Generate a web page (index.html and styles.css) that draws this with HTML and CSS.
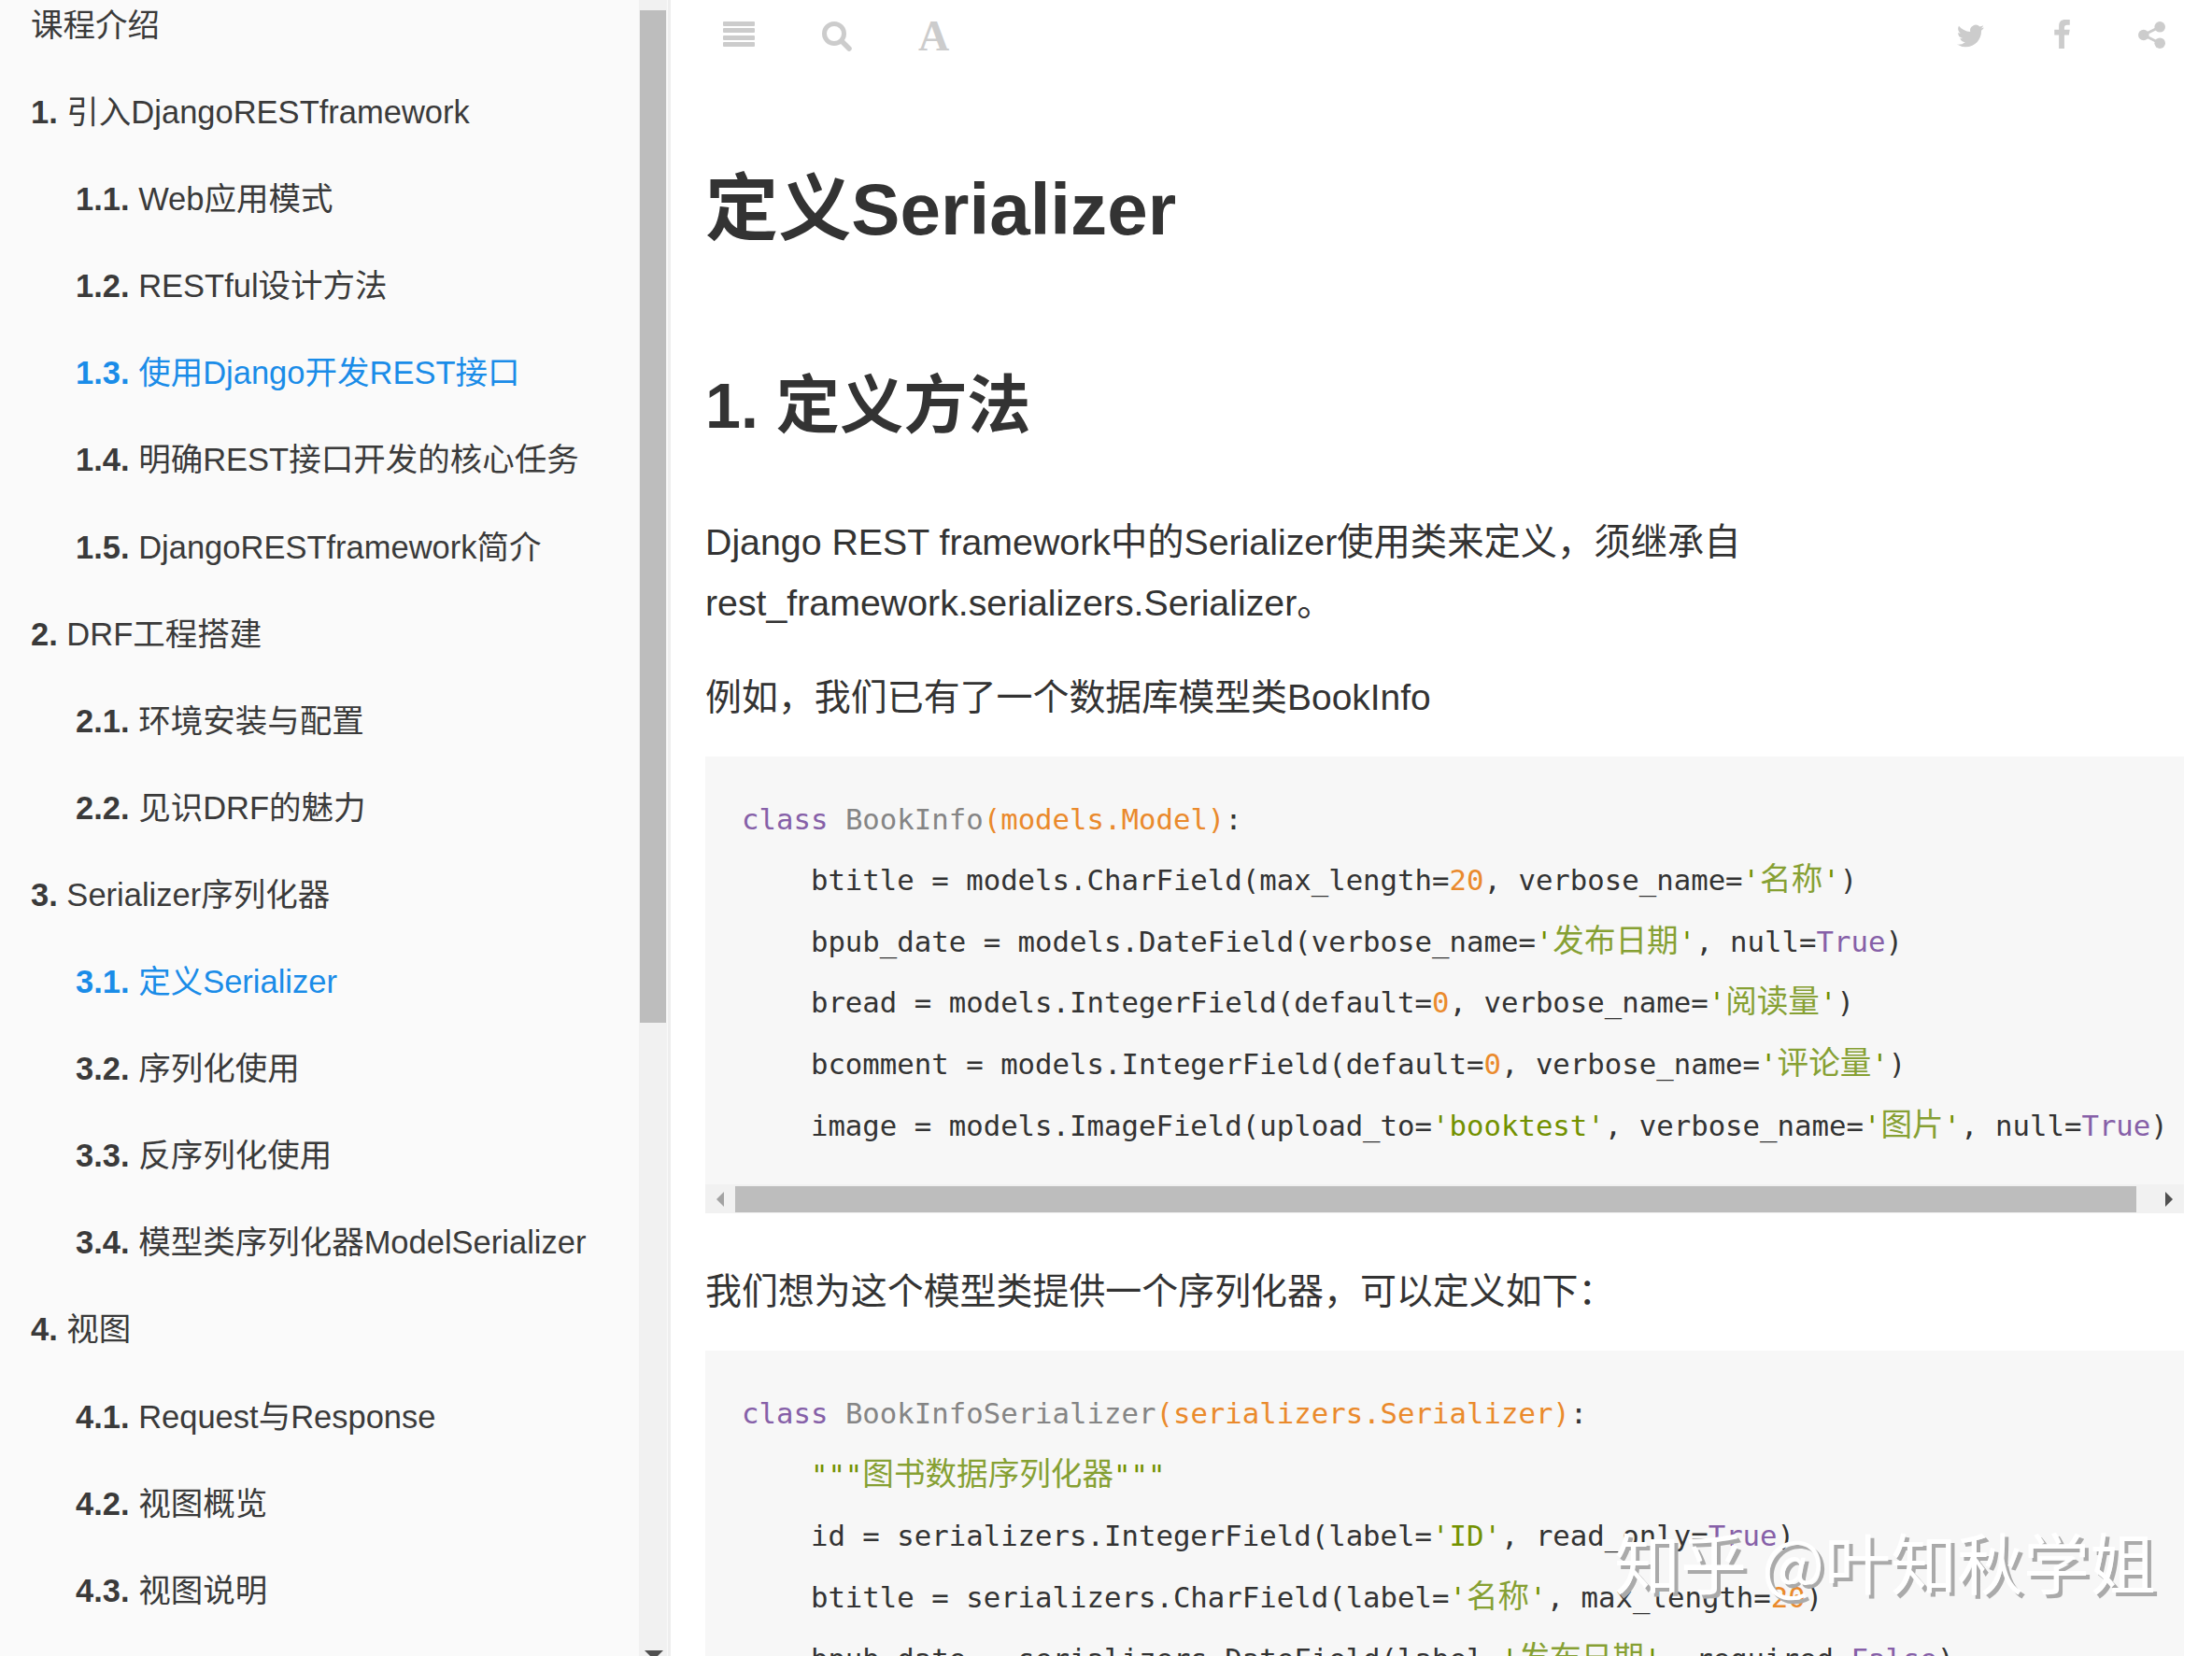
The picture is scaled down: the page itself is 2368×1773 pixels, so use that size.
FILE: index.html
```html
<!DOCTYPE html>
<html lang="zh">
<head>
<meta charset="utf-8">
<title>定义Serializer</title>
<link rel="stylesheet" href="styles.css">
</head>
<body>
<div class="app">
  <aside class="sidebar">
    <nav class="nav">
      <ul class="toc">
        <li class="item">课程介绍</li>
        <li class="item"><b>1.</b> 引入DjangoRESTframework</li>
        <li class="item sub"><b>1.1.</b> Web应用模式</li>
        <li class="item sub"><b>1.2.</b> RESTful设计方法</li>
        <li class="item sub active"><b>1.3.</b> 使用Django开发REST接口</li>
        <li class="item sub"><b>1.4.</b> 明确REST接口开发的核心任务</li>
        <li class="item sub"><b>1.5.</b> DjangoRESTframework简介</li>
        <li class="item"><b>2.</b> DRF工程搭建</li>
        <li class="item sub"><b>2.1.</b> 环境安装与配置</li>
        <li class="item sub"><b>2.2.</b> 见识DRF的魅力</li>
        <li class="item"><b>3.</b> Serializer序列化器</li>
        <li class="item sub active"><b>3.1.</b> 定义Serializer</li>
        <li class="item sub"><b>3.2.</b> 序列化使用</li>
        <li class="item sub"><b>3.3.</b> 反序列化使用</li>
        <li class="item sub"><b>3.4.</b> 模型类序列化器ModelSerializer</li>
        <li class="item"><b>4.</b> 视图</li>
        <li class="item sub"><b>4.1.</b> Request与Response</li>
        <li class="item sub"><b>4.2.</b> 视图概览</li>
        <li class="item sub"><b>4.3.</b> 视图说明</li>
      </ul>
    </nav>
    <div class="vbar">
      <div class="vthumb"></div>
      <div class="varrow"></div>
    </div>
  </aside>
  <main class="main">
    <header class="toolbar">
      <div class="tools">
        <svg class="ic ic-menu" viewBox="0 0 34 27"><g fill="#ccc"><rect width="34" height="5" y="0" rx="1"/><rect width="34" height="5" y="7" rx="1"/><rect width="34" height="5" y="15" rx="1"/><rect width="34" height="5" y="22" rx="1"/></g></svg>
        <svg class="ic ic-search" viewBox="0 0 32 32"><circle cx="13" cy="13" r="10.5" fill="none" stroke="#ccc" stroke-width="5"/><path d="M21 21l8 8" stroke="#ccc" stroke-width="5.5" stroke-linecap="round"/></svg>
        <span class="ic-font">A</span>
      </div>
      <div class="tools right">
        <svg class="ic ic-tw" viewBox="0 0 24 24"><path fill="#ccc" d="M23.953 4.57a10 10 0 01-2.825.775 4.958 4.958 0 002.163-2.723c-.951.555-2.005.959-3.127 1.184a4.92 4.92 0 00-8.384 4.482C7.69 8.095 4.067 6.13 1.64 3.162a4.822 4.822 0 00-.666 2.475c0 1.71.87 3.213 2.188 4.096a4.904 4.904 0 01-2.228-.616v.06a4.923 4.923 0 003.946 4.827 4.996 4.996 0 01-2.212.085 4.936 4.936 0 004.604 3.417 9.867 9.867 0 01-6.102 2.105c-.39 0-.779-.023-1.17-.067a13.995 13.995 0 007.557 2.209c9.053 0 13.998-7.496 13.998-13.985 0-.21 0-.42-.015-.63A9.935 9.935 0 0024 4.59z"/></svg>
        <svg class="ic ic-fb" viewBox="0 0 17 32"><path fill="#ccc" d="M5 32V17H0v-6h5V7c0-5 3-7 7-7h5v6h-3c-2 0-3 1-3 3v2h6l-1 6h-5v15z"/></svg>
        <svg class="ic ic-share" viewBox="0 0 30 30"><g fill="#ccc"><circle cx="24" cy="6" r="6"/><circle cx="6" cy="15" r="6"/><circle cx="24" cy="24" r="6"/></g><path d="M24 6L6 15l18 9" fill="none" stroke="#ccc" stroke-width="3"/></svg>
      </div>
    </header>
    <article class="content">
      <h1 class="title">定义Serializer</h1>
      <h2 class="heading">1. 定义方法</h2>
      <p class="para">Django REST framework中的Serializer使用类来定义，须继承自<br>rest_framework.serializers.Serializer。</p>
      <p class="para para-zh">例如，我们已有了一个数据库模型类BookInfo</p>
      <div class="code">
        <div class="code-body">
          <div class="line"><span class="kw">class</span> <span class="nm">BookInfo</span><span class="or">(models.Model)</span>:</div>
          <div class="line">    btitle = models.CharField(max_length=<span class="or">20</span>, verbose_name=<span class="st">'<span class="cj">名称</span>'</span>)</div>
          <div class="line">    bpub_date = models.DateField(verbose_name=<span class="st">'<span class="cj">发布日期</span>'</span>, null=<span class="kw">True</span>)</div>
          <div class="line">    bread = models.IntegerField(default=<span class="or">0</span>, verbose_name=<span class="st">'<span class="cj">阅读量</span>'</span>)</div>
          <div class="line">    bcomment = models.IntegerField(default=<span class="or">0</span>, verbose_name=<span class="st">'<span class="cj">评论量</span>'</span>)</div>
          <div class="line">    image = models.ImageField(upload_to=<span class="st">'booktest'</span>, verbose_name=<span class="st">'<span class="cj">图片</span>'</span>, null=<span class="kw">True</span>)</div>
        </div>
        <div class="hbar">
          <span class="arrow-left"></span>
          <div class="hthumb"></div>
          <span class="arrow-right"></span>
        </div>
      </div>
      <p class="para para-zh para-after">我们想为这个模型类提供一个序列化器，可以定义如下：</p>
      <div class="code">
        <div class="code-body">
          <div class="line"><span class="kw">class</span> <span class="nm">BookInfoSerializer</span><span class="or">(serializers.Serializer)</span>:</div>
          <div class="line">    <span class="st">"""<span class="cj">图书数据序列化器</span>"""</span></div>
          <div class="line">    id = serializers.IntegerField(label=<span class="st">'ID'</span>, read_only=<span class="kw">True</span>)</div>
          <div class="line">    btitle = serializers.CharField(label=<span class="st">'<span class="cj">名称</span>'</span>, max_length=<span class="or">20</span>)</div>
          <div class="line">    bpub_date = serializers.DateField(label=<span class="st">'<span class="cj">发布日期</span>'</span>, required=<span class="kw">False</span>)</div>
        </div>
      </div>
    </article>
  </main>
</div>
<div class="watermark">知乎 @叶知秋学姐</div>
</body>
</html>
```

FILE: styles.css
```css
* { box-sizing: border-box; }
html, body { margin: 0; padding: 0; height: 1773px; overflow: hidden; background: #fff; }
body {
  position: relative;
  font-family: "Liberation Sans", "Noto Sans CJK SC", sans-serif;
  color: #333;
}
.app { display: flex; height: 1773px; overflow: hidden; }

.sidebar {
  flex: 0 0 718px;
  display: flex;
  background: #fafafa;
  border-right: 3px solid #eee;
  overflow: hidden;
}
.nav { flex: 1; overflow: hidden; }
.toc { list-style: none; margin: -19px 0 0; padding: 0; }
.item {
  height: 93.1px;
  line-height: 93px;
  padding-left: 33px;
  font-size: 34.5px;
  color: #3a3a3a;
  white-space: nowrap;
}
.item.sub { padding-left: 81px; }
.item.active { color: #1a8ce8; }
.item b { font-weight: 700; }

.vbar {
  flex: 0 0 30px;
  margin-right: 1px;
  background: #f1f1f1;
  padding: 11px 1px 0;
  position: relative;
}
.vthumb { height: 1084px; background: #bdbdbd; }
.varrow {
  position: absolute;
  left: 6px;
  bottom: -4px;
  border-left: 10px solid transparent;
  border-right: 10px solid transparent;
  border-top: 10px solid #505050;
}

.main { flex: 1; min-width: 0; padding: 0 30px 0 37px; }
.toolbar {
  display: flex;
  justify-content: space-between;
  align-items: flex-start;
  height: 80px;
  padding-top: 22px;
}
.tools { display: flex; align-items: flex-start; }
.ic { display: block; }
.ic-menu { width: 34px; height: 27px; margin: 1px 0 0 19px; }
.ic-search { width: 32px; height: 32px; margin: 1px 0 0 72px; }
.ic-font {
  font-family: "Liberation Serif", serif;
  font-weight: 700;
  font-size: 46px;
  line-height: 34px;
  color: #ccc;
  margin-left: 71px;
}
.tools.right { padding-right: 20px; }
.ic-tw { width: 29px; height: 29px; margin: 2px 75px 0 0; }
.ic-fb { width: 17px; height: 31px; margin: -1px 73px 0 0; }
.ic-share { width: 29px; height: 29px; margin-top: 1px; }

.title { margin: 0; font-size: 78.2px; line-height: 1.2; font-weight: 700; padding-top: 98px; }
.heading { margin: 0; font-size: 68.2px; line-height: 1.2; font-weight: 700; padding-top: 122px; }
.para { margin: 0; font-size: 39.3px; line-height: 65px; padding-top: 72px; }
.para.para-zh { font-size: 38.95px; padding-top: 0; margin-top: 36px; }
.para.para-after { margin-top: 51px; }

.code { background: #f7f7f7; margin-top: 31px; overflow: hidden; }
.code-body { padding: 35px 0 30px 39px; }
.line {
  height: 65.6px;
  line-height: 65.6px;
  font-family: "DejaVu Sans Mono", "Noto Sans CJK SC", monospace;
  font-size: 30.7px;
  white-space: pre;
  color: #333;
}
.kw { color: #8660a8; }
.nm { color: #858585; }
.or { color: #ea8a2c; }
.st { color: #739100; }
.cj { font-size: 33.6px; line-height: 0; font-family: "Noto Sans CJK SC", sans-serif; color: #86a033; }

.hbar {
  display: flex;
  align-items: center;
  height: 31px;
  background: #f1f1f1;
  padding: 2px 0 1px 32px;
  position: relative;
}
.hthumb { width: 1500px; height: 28px; background: #bdbdbd; }
.arrow-left {
  position: absolute;
  left: 12px;
  top: 8px;
  border-top: 8px solid transparent;
  border-bottom: 8px solid transparent;
  border-right: 8px solid #a3a3a3;
}
.arrow-right {
  position: absolute;
  right: 12px;
  top: 8px;
  border-top: 8px solid transparent;
  border-bottom: 8px solid transparent;
  border-left: 8px solid #505050;
}

.watermark {
  position: absolute;
  left: 1728px;
  top: 1625px;
  font-family: "Noto Sans CJK SC", sans-serif;
  font-size: 71px;
  line-height: 90px;
  white-space: nowrap;
  color: #fff;
  text-shadow: 4px 4px 0 #aaa;
}
```
